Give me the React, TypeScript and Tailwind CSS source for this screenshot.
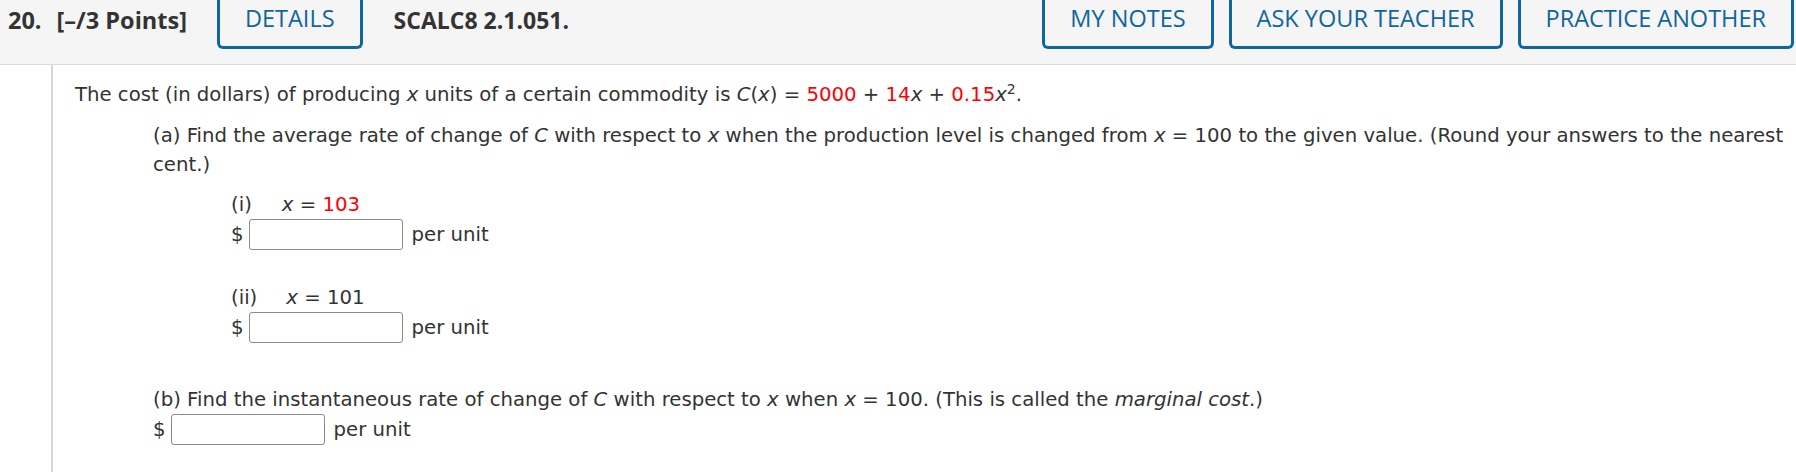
import React from "react";

const headerFont = { fontFamily: '"Open Sans", "Liberation Sans", sans-serif' };

function HeaderButton({ label }: { label: string }) {
  return (
    <div className="flex h-[49px] items-center justify-center border-x-[3px] border-b-[3px] border-t-0 border-[#0f659e] rounded-b-[6px] px-[25px] pb-[8px] text-[23.5px] font-medium text-[#0f659e] whitespace-nowrap">
      {label}
    </div>
  );
}

function AnswerBox({ className = "" }: { className?: string }) {
  return (
    <div className={"flex items-center h-[31px] " + className}>
      <span>$</span>
      <input
        type="text"
        className="ml-[5px] h-[31px] w-[154px] rounded-[3px] border border-[#8a8a8a] bg-white outline-none"
      />
      <span className="ml-[9px]">per unit</span>
    </div>
  );
}

function V({ children }: { children: React.ReactNode }) {
  return <i>{children}</i>;
}

export default function App() {
  return (
    <div className="flex min-h-[472px] flex-col bg-white text-[#333]">
      {/* Question header */}
      <div
        className="flex h-[65px] items-start border-b border-[#dcdcdc] bg-[#f5f5f5] pl-[8px] pr-[2px]"
        style={headerFont}
      >
        <div className="flex h-[41px] items-center text-[23.5px] font-bold whitespace-nowrap">
          <span>20.</span>
          <span className="ml-[15px]">[–/3 Points]</span>
        </div>
        <div className="ml-[30px]">
          <HeaderButton label="DETAILS" />
        </div>
        <div className="ml-[31px] flex h-[41px] items-center text-[23px] font-bold whitespace-nowrap">
          SCALC8 2.1.051.
        </div>
        <div className="ml-auto flex gap-[15px]">
          <HeaderButton label="MY NOTES" />
          <HeaderButton label="ASK YOUR TEACHER" />
          <HeaderButton label="PRACTICE ANOTHER" />
        </div>
      </div>

      {/* Question body */}
      <div className="flex flex-1">
        <div className="w-[51px] shrink-0" />
        <div
          className="flex-1 border-l-2 border-[#d6d6d6] pl-[22px] pt-[15px] text-[19.7px] leading-[29px]"
          style={{ fontFamily: '"DejaVu Sans", Verdana, sans-serif' }}
        >
          <p>
            The cost (in dollars) of producing <V>x</V> units of a certain commodity is{" "}
            <V>C</V>(<V>x</V>) = <span className="text-[#ff0000]">5000</span> +{" "}
            <span className="text-[#ff0000]">14</span>
            <V>x</V> + <span className="text-[#ff0000]">0.15</span>
            <V>x</V>
            <sup className="text-[14px]">2</sup>.
          </p>

          <div className="ml-[78px] mt-[12px]">
            <p>
              (a) Find the average rate of change of <V>C</V> with respect to <V>x</V> when the
              production level is changed from <V>x</V> = 100 to the given value. (Round your
              answers to the nearest cent.)
            </p>

            <div className="ml-[78px] mt-[11px]">
              <div>
                (i)<span className="ml-[30px]"><V>x</V> = </span>
                <span className="text-[#ff0000]">103</span>
              </div>
              <AnswerBox />

              <div className="mt-[33px]">
                (ii)<span className="ml-[29px]"><V>x</V> = 101</span>
              </div>
              <AnswerBox />
            </div>

            <p className="mt-[42px]">
              (b) Find the instantaneous rate of change of <V>C</V> with respect to <V>x</V> when{" "}
              <V>x</V> = 100. (This is called the <V>marginal cost</V>.)
            </p>
            <AnswerBox />
          </div>
        </div>
      </div>
    </div>
  );
}
